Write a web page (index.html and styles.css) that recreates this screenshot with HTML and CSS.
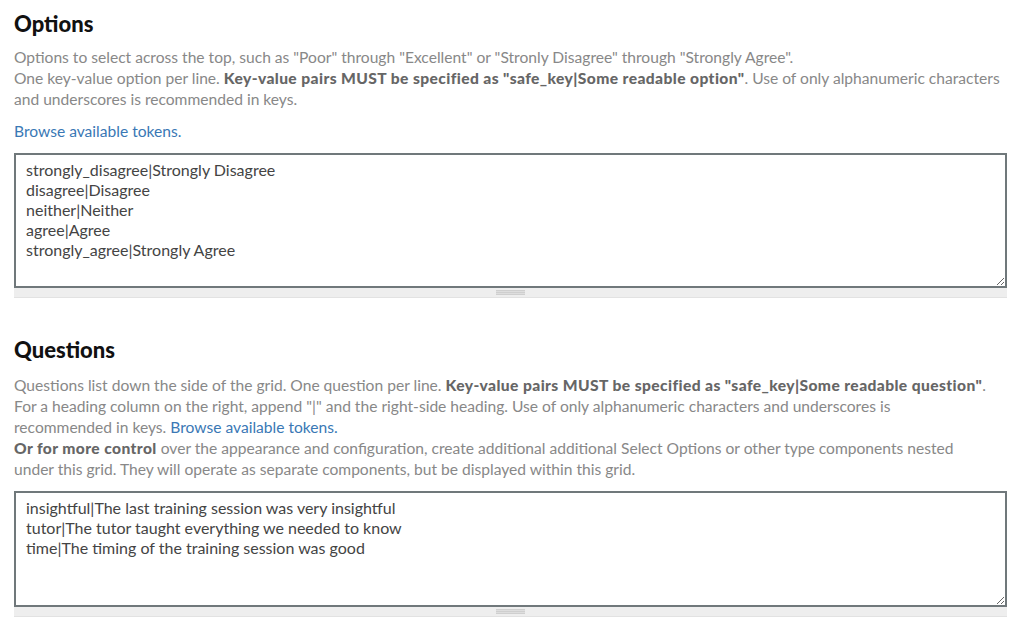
FILE: index.html
```html
<!DOCTYPE html>
<html lang="en">
<head>
<meta charset="utf-8">
<title>Grid options</title>
<link rel="stylesheet" href="styles.css">
</head>
<body>
<main class="page">
  <section class="field">
    <h2 class="field-title">Options</h2>
    <div class="field-desc">Options to select across the top, such as "Poor" through "Excellent" or "Stronly Disagree" through "Strongly Agree".<br>One key-value option per line. <strong>Key-value pairs MUST be specified as "safe_key|Some readable option"</strong>. Use of only alphanumeric characters<br>and underscores is recommended in keys.</div>
    <p class="tokens"><a href="#" class="link">Browse available tokens.</a></p>
    <div class="resizable">
      <textarea class="editor editor-options" spellcheck="false">strongly_disagree|Strongly Disagree
disagree|Disagree
neither|Neither
agree|Agree
strongly_agree|Strongly Agree</textarea>
      <div class="grippie"><span class="grip"></span></div>
    </div>
  </section>
  <section class="field field-questions">
    <h2 class="field-title">Questions</h2>
    <div class="field-desc">Questions list down the side of the grid. One question per line. <strong>Key-value pairs MUST be specified as "safe_key|Some readable question"</strong>.<br>For a heading column on the right, append "|" and the right-side heading. Use of only alphanumeric characters and underscores is<br>recommended in keys. <a href="#" class="link">Browse available tokens.</a><br><strong>Or for more control</strong> over the appearance and configuration, create additional additional Select Options or other type components nested<br>under this grid. They will operate as separate components, but be displayed within this grid.</div>
    <div class="resizable">
      <textarea class="editor editor-questions" spellcheck="false">insightful|The last training session was very insightful
tutor|The tutor taught everything we needed to know
time|The timing of the training session was good</textarea>
      <div class="grippie"><span class="grip"></span></div>
    </div>
  </section>
</main>
</body>
</html>
```

FILE: styles.css
```css
html, body {
  margin: 0;
  padding: 0;
  background: #ffffff;
}
body {
  font-family: Lato, "Open Sans", "Liberation Sans", sans-serif;
  font-size: 15.6px;
  line-height: 21px;
  color: #333333;
}
.page {
  width: 993px;
  padding: 11px 0 0 14px;
}
.field-title {
  margin: 0 0 10px;
  font-size: 22px;
  line-height: 26px;
  font-weight: 900;
  color: #111111;
}
.field-questions {
  margin-top: 39px;
}
.field-questions .field-title {
  margin-bottom: 12px;
}
.field-desc {
  color: #888888;
  margin: 0 0 11px;
}
.field-desc strong {
  color: #666666;
  font-weight: 900;
  letter-spacing: 0.4px;
}
.tokens {
  margin: 0 0 11px;
}
.link {
  color: #3a78b5;
  text-decoration: none;
}
.resizable {
  display: flex;
  flex-direction: column;
}
.editor {
  display: block;
  box-sizing: border-box;
  width: 100%;
  margin: 0;
  border: 2px solid #70787b;
  border-radius: 0;
  padding: 5px 10px 4px;
  font-family: Lato, "Open Sans", "Liberation Sans", sans-serif;
  font-size: 16px;
  line-height: 20px;
  color: #444444;
  background: #ffffff;
  resize: vertical;
  outline: none;
}
.editor-options {
  height: 135px;
}
.editor-questions {
  height: 116px;
}
.grippie {
  display: flex;
  justify-content: center;
  align-items: center;
  height: 9px;
  background: #eeeeee;
  border-bottom: 1px solid #e2e2e2;
}
.grip {
  display: block;
  width: 29px;
  height: 5px;
  background: repeating-linear-gradient(to bottom, #cfcfcf 0, #cfcfcf 1px, #dedede 1px, #dedede 2px);
}
```
